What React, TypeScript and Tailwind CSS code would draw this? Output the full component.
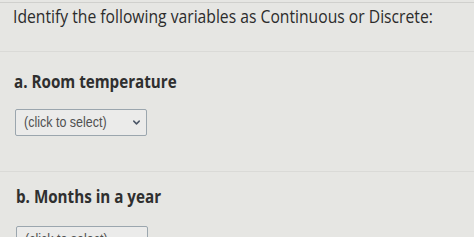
import { ChevronDown } from 'lucide-react';

function SelectBox() {
  return (
    <div className="flex h-[27px] w-[132px] items-center justify-between rounded-[2px] border border-[#9ba6ae] bg-[#ebebea] pl-[8px] pr-[4px]">
      <span className="origin-left scale-y-[1.15] font-['Liberation_Sans',Arial,sans-serif] text-[12.5px] text-[#505050]">(click to select)</span>
      <ChevronDown size={11} strokeWidth={3.2} className="text-[#4a5566]" />
    </div>
  );
}

export default function App() {
  return (
    <div className="h-[237px] w-[474px] overflow-hidden bg-[#e6e6e3] font-['Open_Sans',sans-serif]">
      <div className="mt-[2px] border-t border-[#d0d0cd] pt-[2px]">
        <h1 className="origin-left scale-y-[1.2] whitespace-nowrap pl-[13px] text-[15.7px] leading-[22px] text-[#2c2c2c]">
          Identify the following variables as Continuous or Discrete:
        </h1>
      </div>

      <div className="mt-[24px] border-t border-[#dadad7] pl-[14px] pt-[18px]">
        <p className="origin-left scale-y-[1.15] text-[15.2px] font-bold leading-[22px] text-[#2f2f2f]">a. Room temperature</p>
        <div className="mt-[17px] pl-[1px]">
          <SelectBox />
        </div>
      </div>

      <div className="mt-[35px] border-t border-[#dadad7] pl-[16px] pt-[13px]">
        <p className="origin-left scale-y-[1.15] text-[15.2px] font-bold leading-[22px] text-[#2f2f2f]">b. Months in a year</p>
        <div className="mt-[19px]">
          <SelectBox />
        </div>
      </div>
    </div>
  );
}
